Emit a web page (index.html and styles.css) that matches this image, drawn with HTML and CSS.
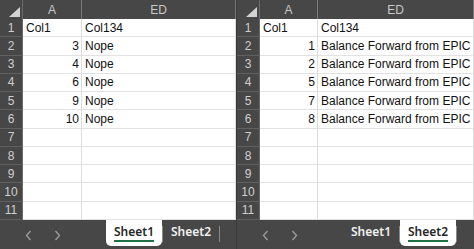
FILE: index.html
```html
<!DOCTYPE html>
<html lang="en">

<head>
    <meta charset="UTF-8">
    <title>Sheets</title>
    <link rel="stylesheet" href="styles.css">
</head>

<body>
    <div class="window">
        <!-- Left workbook: Sheet1 -->
        <div class="pane pane-left">
            <div class="grid">
                <div class="corner"><span class="corner-mark"></span></div>
                <div class="col-head">A</div>
                <div class="col-head">ED</div>

                <div class="row-head">1</div><div class="cell">Col1</div><div class="cell">Col134</div>
                <div class="row-head">2</div><div class="cell num">3</div><div class="cell">Nope</div>
                <div class="row-head">3</div><div class="cell num">4</div><div class="cell">Nope</div>
                <div class="row-head">4</div><div class="cell num">6</div><div class="cell">Nope</div>
                <div class="row-head">5</div><div class="cell num">9</div><div class="cell">Nope</div>
                <div class="row-head">6</div><div class="cell num">10</div><div class="cell">Nope</div>
                <div class="row-head">7</div><div class="cell"></div><div class="cell"></div>
                <div class="row-head">8</div><div class="cell"></div><div class="cell"></div>
                <div class="row-head">9</div><div class="cell"></div><div class="cell"></div>
                <div class="row-head">10</div><div class="cell"></div><div class="cell"></div>
                <div class="row-head">11</div><div class="cell"></div><div class="cell"></div>
            </div>
            <div class="tabbar">
                <div class="nav">
                    <svg width="7" height="11" viewBox="0 0 7 11"><path d="M5.5 1 1.5 5.5l4 4.5" fill="none" stroke="#9e9e9e" stroke-width="1.3"/></svg>
                    <svg width="7" height="11" viewBox="0 0 7 11"><path d="M1.5 1l4 4.5-4 4.5" fill="none" stroke="#9e9e9e" stroke-width="1.3"/></svg>
                </div>
                <div class="tab active">Sheet1</div>
                <div class="tab-sep"></div>
                <div class="tab">Sheet2</div>
                <div class="tab-sep"></div>
            </div>
        </div>

        <!-- Right workbook: Sheet2 -->
        <div class="pane pane-right">
            <div class="grid">
                <div class="corner"><span class="corner-mark"></span></div>
                <div class="col-head">A</div>
                <div class="col-head">ED</div>

                <div class="row-head">1</div><div class="cell">Col1</div><div class="cell">Col134</div>
                <div class="row-head">2</div><div class="cell num">1</div><div class="cell">Balance Forward from EPIC</div>
                <div class="row-head">3</div><div class="cell num">2</div><div class="cell">Balance Forward from EPIC</div>
                <div class="row-head">4</div><div class="cell num">5</div><div class="cell">Balance Forward from EPIC</div>
                <div class="row-head">5</div><div class="cell num">7</div><div class="cell">Balance Forward from EPIC</div>
                <div class="row-head">6</div><div class="cell num">8</div><div class="cell">Balance Forward from EPIC</div>
                <div class="row-head">7</div><div class="cell"></div><div class="cell"></div>
                <div class="row-head">8</div><div class="cell"></div><div class="cell"></div>
                <div class="row-head">9</div><div class="cell"></div><div class="cell"></div>
                <div class="row-head">10</div><div class="cell"></div><div class="cell"></div>
                <div class="row-head">11</div><div class="cell"></div><div class="cell"></div>
            </div>
            <div class="tabbar">
                <div class="nav">
                    <svg width="7" height="11" viewBox="0 0 7 11"><path d="M5.5 1 1.5 5.5l4 4.5" fill="none" stroke="#9e9e9e" stroke-width="1.3"/></svg>
                    <svg width="7" height="11" viewBox="0 0 7 11"><path d="M1.5 1l4 4.5-4 4.5" fill="none" stroke="#9e9e9e" stroke-width="1.3"/></svg>
                </div>
                <div class="tab">Sheet1</div>
                <div class="tab-sep"></div>
                <div class="tab active">Sheet2</div>
                <div class="tab-sep"></div>
            </div>
        </div>
    </div>
</body>

</html>
```

FILE: styles.css
```css
body {
    margin: 0;
    background: #474747;
    font-family: 'Liberation Sans', Arial, sans-serif;
}

.window {
    display: flex;
    width: 474px;
    height: 249px;
    overflow: hidden;
}

.pane {
    display: flex;
    flex-direction: column;
    background: #474747;
    overflow: hidden;
}

.pane-left {
    width: 236px;
    border-right: 1px solid #3a3a3a;
}

.pane-right {
    flex: 1;
}

.grid {
    display: grid;
    grid-template-columns: 23px 59px 1fr;
    grid-template-rows: 19px repeat(11, 1fr);
    height: 220px;
    background: #ffffff;
}

.pane-right .grid {
    grid-template-columns: 23px 58px 1fr;
}

.corner {
    background: #474747;
    border-right: 1px solid #6a6a6a;
    position: relative;
}

.corner-mark {
    position: absolute;
    right: 2px;
    bottom: 2px;
    width: 11px;
    height: 10px;
    background: #d4d4d4;
    clip-path: polygon(100% 0, 100% 100%, 0 100%);
}

.col-head {
    background: #474747;
    color: #c8c8c8;
    font-size: 12px;
    display: flex;
    align-items: center;
    justify-content: center;
    border-right: 1px solid #7a7a7a;
}

.row-head {
    background: #474747;
    color: #cfcfcf;
    font-size: 12px;
    display: flex;
    align-items: center;
    justify-content: center;
    border-bottom: 1px solid #606060;
    border-right: 1px solid #6a6a6a;
}

.cell {
    font-size: 12px;
    color: #111111;
    display: flex;
    align-items: center;
    padding: 0 2px 0 3px;
    white-space: nowrap;
    overflow: hidden;
    border-right: 1px solid #dcdcdc;
    border-bottom: 1px solid #e2e2e2;
}

.cell.num {
    justify-content: flex-end;
}

.tabbar {
    flex: 1;
    display: flex;
    align-items: flex-start;
    background: #474747;
}

.nav {
    width: 106px;
    display: flex;
    gap: 22px;
    padding: 10px 0 0 25px;
    box-sizing: border-box;
}

.tab {
    width: 56px;
    height: 26px;
    box-sizing: border-box;
    display: flex;
    justify-content: center;
    font-family: 'Noto Sans', sans-serif;
    font-size: 12px;
    font-weight: 600;
    line-height: 16px;
    color: #f0f0f0;
    padding-top: 4px;
}

.tab.active {
    background: #ffffff;
    color: #262626;
    border-radius: 0 0 5px 5px;
    position: relative;
}

.tab.active::after {
    content: "";
    position: absolute;
    left: 8px;
    right: 8px;
    bottom: 4px;
    height: 2px;
    background: #1e7145;
}

.tab-sep {
    width: 1px;
    height: 16px;
    margin-top: 6px;
    background: #8a8a8a;
}
```
